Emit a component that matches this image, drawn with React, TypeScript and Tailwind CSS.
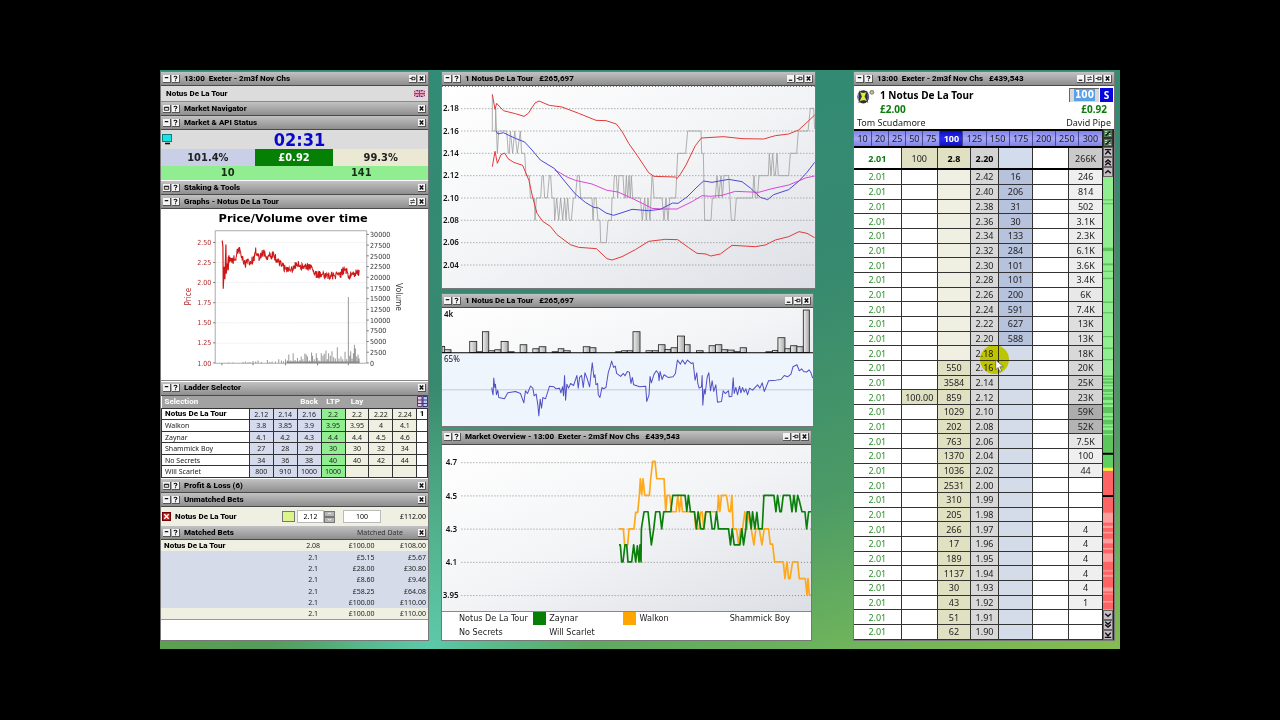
import type { ReactNode } from "react";

type BtnKind = "min" | "box" | "help" | "line" | "swap" | "pin" | "close";

const GLYPHS: Record<BtnKind, ReactNode> = {
  min: <path d="M2 3h4" />,
  box: <path d="M1.5 2.5h5v3.5h-5zM1.5 3h5" strokeWidth="1" />,
  help: <path d="M2.4 2.6C2.4 1 5.6 1 5.6 2.7 5.6 3.8 4 3.8 4 5M4 6v1.2" strokeWidth="1.3" />,
  line: <path d="M2 6h4" />,
  swap: <path d="M1.5 3h4.5M4.8 1.4L6.4 3M6.5 5.2H2M3.2 6.8L1.6 5.2" strokeWidth="0.9" />,
  pin: <path d="M0.8 4h2.4M3.4 2v4M3.4 2.6h3.4v2.8H3.4" strokeWidth="1" />,
  close: <path d="M2 1.8l4 4.4M6 1.8L2 6.2" strokeWidth="1.7" />,
};

const LABELS: Record<BtnKind, string> = {
  min: "Collapse",
  box: "Expand",
  help: "Help",
  line: "Minimise",
  swap: "Swap view",
  pin: "Pin",
  close: "Close",
};

function Btn({ kind }: { kind: BtnKind }) {
  return (
    <button aria-label={LABELS[kind]} className="block size-[8px] shrink-0 border-r border-b border-[#555] bg-[#f4f4f4]">
      <svg viewBox="0 0 8 8" className="block h-full w-full" fill="none" stroke="#111" strokeWidth="1.4">
        {GLYPHS[kind]}
      </svg>
    </button>
  );
}

function Title({
  text,
  amount,
  extra,
  closed = false,
  right = ["close"],
}: {
  text: string;
  amount?: string;
  extra?: string;
  closed?: boolean;
  right?: BtnKind[];
}) {
  return (
    <header className="flex h-[14px] shrink-0 items-center gap-px border-b border-[#4a4a4a] bg-linear-to-b from-[#c2c2c2] to-[#8e8e8e] px-[2px]">
      <Btn kind={closed ? "box" : "min"} />
      <Btn kind="help" />
      <h2 className="ml-[3px] font-[Roboto,sans-serif] text-[8px] leading-none font-extrabold whitespace-pre">{text}</h2>
      {amount && <span className="ml-[5px] font-[Roboto,sans-serif] text-[8px] leading-none font-extrabold">{amount}</span>}
      <span className="grow" />
      {extra && <span className="mr-[14px] text-[7px] leading-none text-[#333]">{extra}</span>}
      <span className="flex gap-px">
        {right.map((k) => (
          <Btn key={k} kind={k} />
        ))}
      </span>
    </header>
  );
}

/* Deterministic jitter so that the tick series look the same on every render. */
function jitter(keys: number[][], step: number, amp: number) {
  let seed = 17;
  const out: string[] = [];
  for (let i = 0; i < keys.length - 1; i++) {
    const [x0, y0] = keys[i];
    const [x1, y1] = keys[i + 1];
    for (let x = x0; x < x1; x += step) {
      seed = (seed * 1103515245 + 12345) % 2147483648;
      const r = seed / 2147483648 - 0.5;
      const y = y0 + ((y1 - y0) * (x - x0)) / (x1 - x0) + r * 2 * amp;
      out.push(`${x.toFixed(1)},${y.toFixed(1)}`);
    }
  }
  return out.join(" ");
}

const PRICE_KEYS = [
  [212, 200], [216, 190], [222, 160], [232, 168], [244, 155], [250, 128], [258, 142], [268, 178], [280, 170],
  [296, 165], [303, 138], [313, 155], [325, 143], [340, 155], [355, 150], [370, 168], [385, 185], [398, 192],
  [415, 190], [428, 173], [440, 184], [455, 182], [470, 190], [484, 210], [500, 209], [520, 211], [555, 210],
  [566, 196], [576, 198], [581, 213], [592, 209], [604, 201], [613, 201],
];

const VOLUME = [
  [222, 2], [235, 2], [265, 4], [272, 5], [280, 3], [286, 4], [295, 7], [303, 5], [310, 8], [320, 4], [338, 10],
  [345, 4], [352, 5], [362, 5], [372, 12], [380, 8], [386, 6], [392, 12], [398, 8], [402, 26], [408, 8], [415, 30],
  [421, 10], [428, 16], [435, 9], [439, 20], [444, 12], [450, 29], [454, 26], [458, 20], [464, 8], [470, 32],
  [473, 22], [478, 12], [484, 30], [487, 16], [492, 8], [499, 30], [504, 22], [508, 28], [513, 38], [517, 12],
  [521, 30], [526, 22], [531, 36], [536, 18], [541, 14], [547, 48], [552, 14], [558, 20], [563, 12], [570, 34],
  [575, 12], [580, 198], [584, 22], [587, 36], [591, 14], [595, 30], [598, 55], [601, 44], [605, 20], [609, 26], [612, 14],
];

function PriceVolume() {
  return (
    <svg viewBox="20 12 798 510" className="block w-full bg-white" fontFamily="'DejaVu Sans Condensed', 'Noto Sans', sans-serif" role="img" aria-label="Price/Volume over time">
      <text x="415" y="52" fontSize="34" fontFamily="'DejaVu Sans', sans-serif" fontWeight="700" textAnchor="middle">Price/Volume over time</text>
      {[112, 172, 232, 292, 352, 413].map((y) => (
        <path key={y} d={`M182 ${y}H635`} stroke="#e4e4e4" strokeWidth="2" strokeDasharray="5 3" />
      ))}
      <path d="M182 77H635V473H182Z" fill="none" stroke="#999" strokeWidth="2.5" />
      <path d="M202 473v6M295 473v6M392 473v6M488 473v6M580 473v6" stroke="#777" strokeWidth="3" />
      {["2.50", "2.25", "2.00", "1.75", "1.50", "1.25", "1.00"].map((t, i) => (
        <g key={t}>
          <path d={`M176 ${112 + i * 60}h6`} stroke="#777" strokeWidth="3" />
          <text x="170" y={120 + i * 60} fontSize="21" fill="#b32a2a" textAnchor="end">{t}</text>
        </g>
      ))}
      {[30000, 27500, 25000, 22500, 20000, 17500, 15000, 12500, 10000, 7500, 5000, 2500, 0].map((t, i) => (
        <g key={t}>
          <path d={`M635 ${88 + i * 32}h6`} stroke="#777" strokeWidth="3" />
          <text x="645" y={96 + i * 32} fontSize="21" fill="#333">{t}</text>
        </g>
      ))}
      <text transform="translate(110 274) rotate(-90)" fontSize="24" fill="#b32a2a" textAnchor="middle">Price</text>
      <text transform="translate(722 275) rotate(90)" fontSize="25" fill="#333" textAnchor="middle">Volume</text>
      <path d={VOLUME.map(([x, h]) => `M${x} 473v${-h}`).join("")} stroke="#999" strokeWidth="3" />
      <path d="M395 470H613" stroke="#8a8a8a" strokeWidth="5" />
      <path d="M203 106L205 125L206 250L209 185L211 222L214 118L215 205L218 175L221 195L223 150" fill="none" stroke="#cc1818" strokeWidth="3.5" />
      <polyline points={jitter(PRICE_KEYS, 1.2, 12)} fill="none" stroke="#cc1818" strokeWidth="3" />
    </svg>
  );
}

const SELECTIONS = [
  ["Notus De La Tour", "2.12", "2.14", "2.16", "2.2", "2.2", "2.22", "2.24", "1"],
  ["Walkon", "3.8", "3.85", "3.9", "3.95", "3.95", "4", "4.1", ""],
  ["Zaynar", "4.1", "4.2", "4.3", "4.4", "4.4", "4.5", "4.6", ""],
  ["Shammick Boy", "27", "28", "29", "30", "30", "32", "34", ""],
  ["No Secrets", "34", "36", "38", "40", "40", "42", "44", ""],
  ["Will Scarlet", "800", "910", "1000", "1000", "", "", "", ""],
];

function selectorBg(i: number) {
  if (i === 0 || i === 8) return "bg-white";
  if (i < 4) return "bg-[#d5dbec]";
  if (i === 4) return "bg-[#90ee90]";
  return "bg-[#efefe2]";
}

function LadderSelector() {
  return (
    <table className="w-full table-fixed border-collapse text-[8px] leading-none">
      <colgroup>
        <col className="w-[33%]" />
        <col className="w-[9%]" />
        <col className="w-[9%]" />
        <col className="w-[9%]" />
        <col className="w-[9%]" />
        <col className="w-[9%]" />
        <col className="w-[9%]" />
        <col className="w-[9%]" />
        <col className="w-[4%]" />
      </colgroup>
      <thead>
        <tr className="h-[13px] bg-[#a2a2a2] font-[Roboto,sans-serif] text-white">
          <th className="p-0 pl-[3px] text-left">Selection</th>
          <th className="p-0" />
          <th className="p-0" />
          <th className="p-0">Back</th>
          <th className="p-0">LTP</th>
          <th className="p-0">Lay</th>
          <th className="p-0" />
          <th className="p-0" />
          <th className="p-0">
            <svg viewBox="0 0 11 11" className="mx-auto block size-[11px]">
              <path d="M0.5 0.5h4.5v10h-4.5z" fill="#e9c9e4" stroke="#5a3a6a" />
              <path d="M6 0.5h4.5v10H6z" fill="#b9c8f4" stroke="#2a3a8a" />
              <path d="M0 4h11M0 7.5h11" stroke="#503870" />
            </svg>
          </th>
        </tr>
      </thead>
      <tbody>
        {SELECTIONS.map((row, r) => (
          <tr key={row[0]} className={r % 2 ? "h-[12px]" : "h-[11px]"}>
            {row.map((c, i) => (
              <td
                key={i}
                className={`border border-[#333] p-0 whitespace-nowrap ${selectorBg(i)} ${
                  i === 0 ? "pl-[3px] text-left" : "text-center"
                } ${r === 0 && (i === 0 || i === 8) ? "font-[Roboto,sans-serif] font-extrabold" : "text-[7px] text-[#222]"}`}
              >
                {c}
              </td>
            ))}
          </tr>
        ))}
      </tbody>
    </table>
  );
}

const MATCHED = [
  ["Notus De La Tour", "2.08", "£100.00", "£108.00"],
  ["", "2.1", "£5.15", "£5.67"],
  ["", "2.1", "£28.00", "£30.80"],
  ["", "2.1", "£8.60", "£9.46"],
  ["", "2.1", "£58.25", "£64.08"],
  ["", "2.1", "£100.00", "£110.00"],
  ["", "2.1", "£100.00", "£110.00"],
];

function Sidebar() {
  return (
    <section className="flex shrink-0 grow basis-[269px] flex-col border border-[#777] bg-white">
      <Title text="13:00  Exeter - 2m3f Nov Chs" right={["pin", "close"]} />
      <div className="flex h-[16px] items-center justify-between border-b border-[#888] bg-[#dcdcdc] pr-[3px] pl-[5px]">
        <span className="font-[Roboto,sans-serif] text-[8px] leading-none font-extrabold">Notus De La Tour</span>
        <svg viewBox="0 0 22 14" className="h-[7px] w-[11px]">
          <path d="M0 0h22v14H0z" fill="#3a2a78" />
          <path d="M0 0l22 14M22 0L0 14" stroke="#f0a8c0" strokeWidth="3" />
          <path d="M11 0v14M0 7h22" stroke="#f7c6d6" strokeWidth="5" />
          <path d="M11 0v14M0 7h22" stroke="#cf2a55" strokeWidth="2.5" />
        </svg>
      </div>
      <Title text="Market Navigator" closed />
      <Title text="Market & API Status" />
      <div className="relative flex h-[19px] items-center justify-center bg-[#dcdcdc] pl-[10px] font-['DejaVu_Sans_Condensed',sans-serif]">
        <svg viewBox="0 0 11 11" className="absolute top-[4px] left-[1px] size-[11px]">
          <rect x="0.5" y="0.5" width="9" height="7" fill="#19e3e3" stroke="#0a8080" />
          <path d="M3 9.5h5" stroke="#111" strokeWidth="1.6" />
        </svg>
        <span className="text-[18px] leading-none font-bold text-[#0808c8]">02:31</span>
      </div>
      <div className="flex h-[17px] text-center font-['DejaVu_Sans_Condensed',sans-serif] text-[11px] leading-[17px] font-bold text-[#222]">
        <span className="grow basis-[93px] bg-[#c8cfe6]">101.4%</span>
        <span className="grow basis-[78px] bg-[#058005] text-white">£0.92</span>
        <span className="grow basis-[94px] bg-[#ebe9d4]">99.3%</span>
      </div>
      <div className="flex h-[14px] bg-[#90ee90] text-center font-['DejaVu_Sans_Condensed',sans-serif] text-[11px] leading-[13px] font-bold text-[#153015]">
        <span className="w-1/2">10</span>
        <span className="w-1/2">141</span>
      </div>
      <div className="mt-px">
        <Title text="Staking & Tools" closed />
        <Title text="Graphs - Notus De La Tour" right={["swap", "close"]} />
      </div>
      <PriceVolume />
      <div className="border-t border-[#888] pt-px">
        <Title text="Ladder Selector" />
      </div>
      <LadderSelector />
      <div className="pt-px">
        <Title text="Profit & Loss (6)" closed />
      </div>
      <Title text="Unmatched Bets" />
      <div className="flex h-[19px] shrink-0 items-center bg-[#efefe2] pr-[2px] pl-[1px] text-[8px] leading-none">
        <button aria-label="Cancel bet" className="size-[9px] border border-[#700] bg-[#c81e1e]">
          <svg viewBox="0 0 8 8" className="block h-full w-full" stroke="#fff" strokeWidth="1.6">
            <path d="M1.5 1.5l5 5M6.5 1.5l-5 5" />
          </svg>
        </button>
        <span className="ml-[4px] grow font-[Roboto,sans-serif] font-extrabold whitespace-nowrap">Notus De La Tour</span>
        <span className="mr-[2px] h-[11px] w-[13px] border border-[#777] bg-[#dcf58a]" />
        <input aria-label="Price" defaultValue="2.12" className="h-[13px] w-[27px] border border-[#bbb] bg-white text-center text-[7px]" />
        <span className="mr-[8px] flex w-[11px] flex-col">
          <button aria-label="Raise price" className="flex h-[6px] items-center justify-center border border-[#777] bg-[#b5b5b5]">
            <svg viewBox="0 0 6 4" className="h-[3px] w-[5px]" fill="none" stroke="#fff" strokeWidth="1.2"><path d="M1 3l2-2 2 2" /></svg>
          </button>
          <button aria-label="Lower price" className="flex h-[6px] items-center justify-center border border-[#777] bg-[#b5b5b5]">
            <svg viewBox="0 0 6 4" className="h-[3px] w-[5px]" fill="none" stroke="#fff" strokeWidth="1.2"><path d="M1 1l2 2 2-2" /></svg>
          </button>
        </span>
        <input aria-label="Stake" defaultValue="100" className="h-[13px] w-[38px] border border-[#bbb] bg-white text-center text-[7px]" />
        <span className="w-[45px] text-right text-[7px]">£112.00</span>
      </div>
      <Title text="Matched Bets" extra="Matched Date" />
      <table className="w-full table-fixed border-collapse border-b border-[#999] text-[7px] leading-none text-[#222]">
        <colgroup>
          <col className="w-[51%]" />
          <col className="w-[12%]" />
          <col className="w-[17%]" />
          <col className="w-[20%]" />
        </colgroup>
        <tbody>
          {MATCHED.map(([name, price, stake, ret], i) => (
            <tr key={i} className={`${i % 3 === 1 ? "h-[12px]" : "h-[11px]"} ${i === 0 || i === 6 ? "bg-[#efefe2]" : "bg-[#d5dbe8]"}`}>
              <td className="p-0 pl-[3px] font-[Roboto,sans-serif] text-[8px] font-extrabold text-black">{name}</td>
              <td className="p-0 text-center">{price}</td>
              <td className="p-0 text-right">{stake}</td>
              <td className="p-0 pr-[2px] text-right">{ret}</td>
            </tr>
          ))}
        </tbody>
      </table>
    </section>
  );
}

const PLOT_BG = "bg-linear-to-br from-white via-[#f3f4f6] to-[#dcdfe5]";

function TickChart() {
  return (
    <svg viewBox="20 66 1119 606" className={`block w-full ${PLOT_BG}`} fill="none" fontFamily="'Noto Sans', sans-serif" role="img" aria-label="Traded price">
      <path d="M20 67H1139" stroke="#666" strokeWidth="3" strokeDasharray="3 6" />
      {["2.18", "2.16", "2.14", "2.12", "2.10", "2.08", "2.06", "2.04"].map((t, i) => (
        <g key={t}>
          <path d={`M78 ${134 + i * 67}H1139`} stroke="#777" strokeWidth="2.5" strokeDasharray="3 6" />
          <text x="23" y={142 + i * 67} fontSize="24" fontWeight="600" fill="#111">{t}</text>
        </g>
      ))}
      <path
        stroke="#a0a0a0"
        strokeWidth="2.5"
        d="M171 92V201H180L181 133L186 268L190 201H214L219 268H222L225 201L232 268L238 201L246 268L255 201L259 268H268L272 335H282L285 402H297L299 469L303 402H316L320 335H324L328 402H336L342 335H346L350 402H356L358 469L364 402L370 469L376 402L382 469L388 402L392 469L397 402L402 469H408L414 402H420L426 335H432L436 402H470L473 469L477 402H482L488 469H494L496 536H513L518 469H528L530 402H534L537 335H543L547 402L551 335H563L567 402H570L573 335L577 402L581 335L585 402L588 335L592 402H615L621 469L628 402L633 469L638 402L644 469L650 335H652L656 402H680L686 469L692 402L698 469L703 402H721L727 268H751L757 201H797L799 268H804L808 469H827L831 402H840L845 335L850 402L857 335L861 402L866 335H880L884 402L888 469H898L903 402H951L956 335L960 402H966L971 335H999L1002 268L1007 335L1012 268L1017 335H1020L1025 268L1029 335H1060L1065 268H1084L1089 201H1118L1125 133H1135L1138 195"
      />
      <path
        stroke="#e23a3a"
        strokeWidth="3"
        d="M171 91L179 136L184 118L204 140L240 149L266 157L279 148L299 117L311 111L342 124L380 129L430 148L482 169L512 170L543 180L560 202L580 238L606 275L640 326L656 337L720 339L725 344L735 331L752 303L780 245L798 222L865 218L920 224L985 225L1020 215L1060 210L1090 198L1115 175L1138 153"
      />
      <path
        stroke="#e23a3a"
        strokeWidth="3"
        d="M171 308L179 262L186 298L197 272L208 267L218 284L235 295L262 304L281 350L292 400L305 448L322 472L345 487L365 512L405 542L430 550L483 554L515 584L530 588L560 578L600 557L640 532L690 526L727 527L760 551L785 568L812 570L826 576L855 570L890 544L960 548L990 543L1020 528L1060 518L1091 503L1115 508L1138 521"
      />
      <path
        stroke="#d848d8"
        strokeWidth="3"
        d="M358 318L375 327L395 339L420 349L470 360L515 379L548 384L590 403L625 420L650 433L680 435L725 435L770 413L800 395L825 397L860 394L900 382L970 385L1010 374L1060 363L1090 351L1110 342L1138 336"
      />
      <path
        stroke="#4a4ad6"
        strokeWidth="3"
        d="M182 201L188 210L204 206L225 216L240 223L268 234L290 258L315 288L358 314L385 348L420 390L450 415L475 430L490 432L512 447L535 454L560 446L590 436L640 440L675 436L712 417L728 418L755 399L785 369L805 351L830 355L880 346L920 353L945 372L975 400L997 407L1015 392L1060 377L1090 352L1115 325L1138 295"
      />
    </svg>
  );
}

const BARS = [
  [20, 28, 177], [28, 47, 187], [103, 124, 162], [124, 141, 193], [141, 160, 133], [160, 178, 190], [178, 197, 187],
  [197, 218, 162], [218, 236, 193], [254, 274, 172], [292, 311, 184], [311, 331, 178], [350, 368, 193],
  [368, 385, 184], [385, 404, 190], [443, 463, 178], [463, 481, 181], [540, 558, 193], [558, 575, 190],
  [575, 592, 190], [592, 613, 133], [631, 650, 190], [650, 668, 190], [668, 688, 172], [688, 706, 186],
  [706, 725, 181], [725, 746, 146], [746, 763, 172], [782, 802, 190], [820, 839, 175], [839, 858, 172],
  [858, 876, 187], [876, 895, 188], [895, 913, 193], [913, 932, 181], [990, 1010, 193], [1010, 1026, 189],
  [1026, 1047, 151], [1047, 1064, 184], [1064, 1083, 175], [1083, 1102, 178], [1102, 1120, 68],
];

function VolumeChart() {
  return (
    <svg viewBox="20 62 1111 353" className={`block w-full ${PLOT_BG}`} fill="none" fontFamily="'Noto Sans', sans-serif" role="img" aria-label="Volume and strength">
      <defs>
        <linearGradient id="bar" x1="0" x2="1">
          <stop offset="0" stopColor="#f0f0f0" />
          <stop offset="1" stopColor="#a8a8a8" />
        </linearGradient>
      </defs>
      {BARS.map(([a, b, y]) => (
        <rect key={a} x={a} y={y} width={b - a} height={195 - y} fill="url(#bar)" stroke="#222" strokeWidth="2.5" />
      ))}
      <rect x="20" y="197" width="1111" height="221" fill="#eef5fd" />
      <path d="M20 196H1131" stroke="#000" strokeWidth="3.5" />
      <path d="M20 307H1131" stroke="#bbc3cc" strokeWidth="2.5" />
      <text x="26" y="88" fontSize="24" fontWeight="600" fill="#111">4k</text>
      <text x="26" y="224" fontSize="24" fill="#111">65%</text>
      <path
        stroke="#5050c4"
        strokeWidth="3"
        strokeLinejoin="round"
        d="M169 300L171 314L173 322L175 272L178 300L180 290L183 322L187 308L190 330L207 334L217 316L240 312L255 318L265 346L270 310L276 318L285 296L292 302L296 325L302 320L307 352L310 385L314 335L318 362L322 330L330 334L342 296L355 298L362 304L372 302L376 316L381 298L384 325L387 264L390 338L394 290L399 302L405 288L414 294L424 264L428 302L432 270L438 264L443 300L448 256L455 274L462 298L470 226L475 270L478 262L481 292L486 288L488 322L493 330L499 300L503 304L511 300L518 255L523 240L528 221L534 240L539 236L543 258L555 267L563 258L568 265L575 252L581 254L586 288L590 270L594 292L612 298L630 296L633 342L640 322L643 267L647 286L655 260L662 250L668 258L670 280L673 252L679 276L685 262L697 270L712 268L719 258L725 218L734 230L740 218L748 230L755 218L766 228L772 226L778 278L783 256L786 288L790 302L797 298L799 264L801 353L805 305L808 320L814 270L819 256L824 310L829 280L834 312L840 292L845 344L857 342L862 310L868 318L878 310L880 328L888 326L892 271L895 318L900 300L905 322L911 296L915 316L920 300L925 314L930 304L935 322L941 302L950 308L965 292L972 302L979 286L985 312L990 300L998 280L1020 278L1035 276L1045 264L1055 268L1065 260L1071 238L1083 232L1090 250L1097 244L1103 252L1112 254L1119 247L1125 256L1130 272"
      />
    </svg>
  );
}

function OverviewChart() {
  return (
    <svg viewBox="20 58 1105 497" className={`block w-full ${PLOT_BG}`} fill="none" fontFamily="'Noto Sans', sans-serif" role="img" aria-label="Market overview">
      {["4.7", "4.5", "4.3", "4.1", "3.95"].map((t, i) => (
        <g key={t}>
          <path d={`M78 ${111 + i * 99.5}H1125`} stroke="#777" strokeWidth="2.5" strokeDasharray="3 6" />
          <text x={i === 4 ? 22 : 31} y={119 + i * 99.5} fontSize="24" fontWeight="600" fill="#111">{t}</text>
        </g>
      ))}
      <path
        stroke="#ffa81a"
        strokeWidth="5"
        strokeLinejoin="round"
        d="M550 309H563L567 357H576L580 309H595L600 260H606L611 209L614 159L618 206L622 159L627 209H641L645 159L651 107H658L663 159H685L690 258L694 209H702L708 258H721L726 209L731 258L736 212L740 258H776L780 309H790L794 260L799 258L804 309L810 258H845L848 209L852 258L857 209H872L879 256L884 258L888 209L892 309H902L908 355L914 309L920 309L927 258L933 309L938 258L946 309L954 357L960 309H970L978 357L985 309H998L1003 355H1010L1016 408H1042L1047 458L1053 408L1058 458H1062L1070 408H1085L1090 458H1108L1113 508L1116 458L1120 508H1125"
      />
      <path
        stroke="#0a7f0a"
        strokeWidth="5"
        strokeLinejoin="round"
        d="M550 357H554L558 408H562L568 357H573L577 408H588L594 357L600 408L605 360L610 408L613 357L616 408L617 309L625 258H637L647 357L654 309L660 258H672L678 309L684 258H705L711 209H748L753 256L758 209L764 258H776L782 309L787 258L795 309H804L810 258H823L829 309L836 309L842 258L848 309H878L884 357L889 309L895 357H912L918 309L923 357L930 309L934 258L940 258L946 309L950 258L957 309L963 260L968 309H979L984 209H1014L1020 258L1025 209L1032 258H1036L1042 209H1062L1068 258L1074 209L1080 258L1085 209L1090 225L1098 258H1107L1112 309L1118 258H1125"
      />
    </svg>
  );
}

const LEGEND = [
  ["Notus De La Tour", ""],
  ["Zaynar", "bg-[#058005]"],
  ["Walkon", "bg-[#ffa500]"],
  ["Shammick Boy", ""],
  ["No Secrets", ""],
  ["Will Scarlet", ""],
];

function Charts() {
  const win: BtnKind[] = ["line", "pin", "close"];
  return (
    <div className="ml-[12px] flex shrink-0 grow basis-[375px] flex-col">
      <section className="border border-[#777]">
        <Title text="1 Notus De La Tour" amount="£265,697" right={win} />
        <TickChart />
      </section>
      <section className="mt-[4px] mr-[2px] border border-[#777]">
        <Title text="1 Notus De La Tour" amount="£265,697" right={win} />
        <VolumeChart />
      </section>
      <section className="mt-[3px] mr-[4px] border border-[#777]">
        <Title text="Market Overview - 13:00  Exeter - 2m3f Nov Chs" amount="£439,543" right={win} />
        <OverviewChart />
        <ul className="grid h-[29px] auto-rows-[14px] grid-cols-[90fr_90fr_90fr_98fr] border-t border-[#888] bg-white font-['DejaVu_Sans_Condensed',sans-serif] text-[9px] leading-[12px] text-[#222]">
          {LEGEND.map(([name, swatch]) => (
            <li key={name} className="flex items-start gap-[3px] pl-px whitespace-nowrap">
              <span className={`h-[13px] w-[13px] shrink-0 ${swatch}`} />
              {name}
            </li>
          ))}
        </ul>
      </section>
    </div>
  );
}

/* price, back stake, my back stake, lay stake, traded, traded shade */
const LADDER: [string, string, string, string, string, string][] = [
  ["2.42", "", "", "16", "246", "bg-[#efefef]"],
  ["2.40", "", "", "206", "814", "bg-[#efefef]"],
  ["2.38", "", "", "31", "502", "bg-[#efefef]"],
  ["2.36", "", "", "30", "3.1K", "bg-[#ececec]"],
  ["2.34", "", "", "133", "2.3K", "bg-[#ececec]"],
  ["2.32", "", "", "284", "6.1K", "bg-[#e8e8e8]"],
  ["2.30", "", "", "101", "3.6K", "bg-[#ececec]"],
  ["2.28", "", "", "101", "3.4K", "bg-[#ececec]"],
  ["2.26", "", "", "200", "6K", "bg-[#e8e8e8]"],
  ["2.24", "", "", "591", "7.4K", "bg-[#e6e6e6]"],
  ["2.22", "", "", "627", "13K", "bg-[#dedede]"],
  ["2.20", "", "", "588", "13K", "bg-[#dedede]"],
  ["2.18", "", "", "", "18K", "bg-[#d8d8d8]"],
  ["2.16", "550", "", "", "20K", "bg-[#d6d6d6]"],
  ["2.14", "3584", "", "", "25K", "bg-[#d0d0d0]"],
  ["2.12", "859", "100.00", "", "23K", "bg-[#d4d4d4]"],
  ["2.10", "1029", "", "", "59K", "bg-[#acacac]"],
  ["2.08", "202", "", "", "52K", "bg-[#b4b4b4]"],
  ["2.06", "763", "", "", "7.5K", "bg-[#e6e6e6]"],
  ["2.04", "1370", "", "", "100", "bg-[#efefef]"],
  ["2.02", "1036", "", "", "44", "bg-[#efefef]"],
  ["2.00", "2531", "", "", "", "bg-white"],
  ["1.99", "310", "", "", "", "bg-white"],
  ["1.98", "205", "", "", "", "bg-white"],
  ["1.97", "266", "", "", "4", "bg-[#efefef]"],
  ["1.96", "17", "", "", "4", "bg-[#efefef]"],
  ["1.95", "189", "", "", "4", "bg-[#efefef]"],
  ["1.94", "1137", "", "", "4", "bg-[#efefef]"],
  ["1.93", "30", "", "", "4", "bg-[#efefef]"],
  ["1.92", "43", "", "", "1", "bg-[#efefef]"],
  ["1.91", "51", "", "", "", "bg-white"],
  ["1.90", "62", "", "", "", "bg-white"],
];

const STAKES: [string, string][] = [
  ["10", "basis-[18px]"], ["20", "basis-[17px]"], ["25", "basis-[17px]"], ["50", "basis-[17px]"],
  ["75", "basis-[17px]"], ["100", "basis-[23px]"], ["125", "basis-[23px]"], ["150", "basis-[23px]"],
  ["175", "basis-[23px]"], ["200", "basis-[23px]"], ["250", "basis-[23px]"], ["300", "basis-[23px]"],
];

const GREENS = [
  [374, 3], [384, 3], [500, 9], [541, 5], [560, 3], [578, 4], [640, 4], [668, 3], [730, 3], [760, 4], [790, 3],
  [833, 4], [840, 5], [848, 6], [858, 3], [868, 8], [880, 4], [888, 9], [904, 5], [915, 16], [938, 4], [948, 12],
  [965, 3], [975, 10], [988, 50],
];
const PINKS = [
  [1190, 26], [1224, 6], [1240, 4], [1258, 12], [1282, 4], [1296, 22], [1340, 3], [1352, 5], [1385, 10], [1400, 3], [1420, 4],
];

function StripBtn({ label, d }: { label: string; d: string }) {
  return (
    <button aria-label={label} className="block h-[10px] w-full shrink-0 border border-[#666] bg-[#c9bec6]">
      <svg viewBox="0 0 10 9" className="block h-full w-full" fill="none" stroke="#111" strokeWidth="1.8">
        <path d={d} />
      </svg>
    </button>
  );
}

function Ladder() {
  return (
    <section className="ml-[37px] flex shrink-0 grow basis-[262px] flex-col border border-[#777] bg-white">
      <Title text="13:00  Exeter - 2m3f Nov Chs" amount="£439,543" right={["line", "swap", "pin", "close"]} />
      <div className="flex h-[43px] pt-px pr-px pl-[3px]">
        <svg viewBox="0 0 52 42" className="mt-[2px] h-[15px] w-[18px] shrink-0">
          <ellipse cx="18" cy="22" rx="17" ry="19" fill="#26324a" />
          <path d="M4 13v18M32 13v18" stroke="#6f7fb0" strokeWidth="3" />
          <path d="M7 5C13 11 23 11 29 5L23 21 31 38C24 31 13 31 5 39L13 21Z" fill="#e6ea3c" stroke="#111" strokeWidth="1.5" />
          <circle cx="43" cy="9" r="7" fill="#8a8a6a" />
          <path d="M39 9h8M43 5v8" stroke="#ddd" strokeWidth="2" />
        </svg>
        <div className="flex grow flex-col">
          <div className="flex h-[15px] items-center">
            <h1 className="ml-[5px] grow text-[10px] leading-none font-bold">1 Notus De La Tour</h1>
            <div className="flex h-[14px] items-center border-t border-l border-[#666] bg-[#d8d8d8] px-[4px]">
              <input
                aria-label="Stake"
                defaultValue="100"
                className="h-[12px] w-[21px] bg-[#5aa0e8] text-center font-['DejaVu_Sans_Condensed',sans-serif] text-[10px] leading-[12px] font-bold text-white"
              />
            </div>
            <button className="ml-px h-[14px] w-[13px] bg-[#0505dc] text-[10px] leading-none font-bold text-white">S</button>
          </div>
          <div className="flex h-[14px] items-center justify-between pr-[6px] pl-[5px] text-[10px] leading-none font-bold text-[#0b7a0b]">
            <span>£2.00</span>
            <span>£0.92</span>
          </div>
          <div className="-ml-[18px] flex h-[13px] items-center justify-between pr-[2px] text-[9px] leading-none text-[#222]">
            <span>Tom Scudamore</span>
            <span>David Pipe</span>
          </div>
        </div>
      </div>
      <div className="flex grow">
        <div className="relative flex min-w-0 grow flex-col">
          <div className="flex h-[19px] border-y-2 border-black bg-linear-to-b from-[#7f80ec] via-[#a6a8f6] to-[#7f80ec]">
            {STAKES.map(([s, w]) => (
              <button
                key={s}
                className={`grow border-r border-[#4a4a90] p-0 text-[9px] leading-none last:border-r-0 ${w} ${
                  s === "100" ? "bg-linear-to-b from-[#0d0dc0] via-[#2a2af0] to-[#0d0dc0] font-bold text-white" : "text-[#222]"
                }`}
              >
                {s}
              </button>
            ))}
          </div>
          <table className="w-full grow table-fixed border-collapse text-center text-[9px] leading-none text-[#222]">
            <colgroup>
              <col className="w-[19%]" />
              <col className="w-[14.6%]" />
              <col className="w-[13.4%]" />
              <col className="w-[11.3%]" />
              <col className="w-[13.7%]" />
              <col className="w-[14.6%]" />
              <col className="w-[13.4%]" />
            </colgroup>
            <thead>
              <tr className="h-[21px] border-b-2 border-black text-[9px]">
                <th className="border-r border-[#333] p-0 text-[#0b7a0b]">2.01</th>
                <th className="border-r border-[#333] bg-[#e0e0c2] p-0 font-normal">100</th>
                <th className="border-r border-[#333] bg-[#e0e0c2] p-0 text-black">2.8</th>
                <th className="border-r border-[#333] bg-[#d4d4d4] p-0 text-black">2.20</th>
                <th className="border-r border-[#333] bg-[#d3dcec] p-0" />
                <th className="border-r border-[#333] p-0" />
                <th className="bg-[#cacaca] p-0 font-normal">266K</th>
              </tr>
            </thead>
            <tbody>
              {LADDER.map(([price, back, mine, lay, traded, shade]) => (
                <tr key={price} className="border-b border-[#333]">
                  <td className="border-r border-[#333] p-0 text-[#2c8f2c]">2.01</td>
                  <td className={`border-r border-[#333] p-0 ${mine ? "bg-[#e0e0c2]" : ""}`}>{mine}</td>
                  <td className={`border-r border-[#333] p-0 ${back ? "bg-[#e0e0c2]" : "bg-[#efefe2]"}`}>{back}</td>
                  <td className="border-r border-[#333] bg-[#d8d8d8] p-0">{price}</td>
                  <td className={`border-r border-[#333] p-0 ${lay ? "bg-[#b7c2dd]" : "bg-[#d4dcea]"}`}>{lay}</td>
                  <td className="border-r border-[#333] p-0" />
                  <td className={`p-0 ${shade}`}>{traded}</td>
                </tr>
              ))}
            </tbody>
          </table>
          {/* Pointer highlight */}
          <span className="pointer-events-none absolute top-[216px] left-[51%] size-[29px] rounded-full bg-[#e2e600] mix-blend-multiply" />
          <svg viewBox="0 0 12 18" className="pointer-events-none absolute top-[230px] left-[57%] h-[14px] w-[9px]">
            <path d="M1 1v13l3-3 2.4 5.5 2.4-1L6.500 10H11z" fill="#fff" stroke="#444" strokeWidth="0.8" />
          </svg>
        </div>
        <div className="flex w-[12px] shrink-0 flex-col border-x border-[#222]">
          {["Columns", "Layout"].map((l) => (
            <button key={l} aria-label={l} className="block h-[9px] w-full shrink-0 border border-[#333] bg-[#4e7a50]">
              <svg viewBox="0 0 10 9" className="block h-full w-full" fill="none">
                <path d="M1 2h3M1 4.500h3M6 7h3M6 4.500h2" stroke="#c8e8c8" strokeWidth="1.200" />
                <path d="M2 7l6-5" stroke="#111" strokeWidth="1.600" />
              </svg>
            </button>
          ))}
          <StripBtn label="Top" d="M1 1.500h8M1.500 7.500l3.500-4 3.500 4" />
          <StripBtn label="Page up" d="M1.500 5l3.500-3 3.500 3M1.500 8.500l3.500-3 3.500 3" />
          <StripBtn label="Up" d="M1.500 6l3.500-3 3.500 3" />
          <div className="relative w-full grow">
            <svg viewBox="0 316 32 1127" preserveAspectRatio="none" className="absolute inset-0 h-full w-full">
              <path d="M0 316h32v724H0z" fill="#90ee90" />
              {GREENS.map(([y, h]) => (
                <path key={y} d={`M0 ${y}h32v${h}H0z`} fill="#5cc65c" />
              ))}
              <path d="M0 1034h32v42H0z" fill="#5fd060" />
              <path d="M0 1080h32v363H0z" fill="#ff6464" />
              {PINKS.map(([y, h]) => (
                <path key={y} d={`M0 ${y}h32v${h}H0z`} fill="#ff9c9c" />
              ))}
              <path d="M0 1073h32v8H0z" fill="#f2f23a" />
              <path d="M0 1034h32v5H0zM0 1144h32v5H0z" fill="#000" />
            </svg>
          </div>
          <StripBtn label="Down" d="M1.500 3l3.500 3 3.500-3" />
          <StripBtn label="Page down" d="M1.500 0.500l3.500 3 3.500-3M1.500 4l3.500 3 3.500-3" />
          <StripBtn label="Bottom" d="M1 7.500h8M1.500 1.500l3.500 4 3.500-4" />
        </div>
      </div>
    </section>
  );
}

export default function App() {
  return (
    <div className="min-h-screen bg-black px-[160px] pt-[70px] pb-[70px] font-['Noto_Sans','DejaVu_Sans',sans-serif] text-black">
      <main className="bg-[radial-gradient(ellipse_200px_50px_at_0%_100%,#5f9f4e_0%,#5f9f4e00_100%),radial-gradient(ellipse_160px_260px_at_28%_100%,#5cc9ab_0%,#5cc9ab00_100%),linear-gradient(165deg,#2f8c78_0%,#37896f_45%,#4b9a66_72%,#6db35c_90%,#86bb50_100%)]">
        <div className="flex items-stretch pt-px pr-[5px] pb-[8px]">
          <Sidebar />
          <Charts />
          <Ladder />
        </div>
      </main>
    </div>
  );
}
